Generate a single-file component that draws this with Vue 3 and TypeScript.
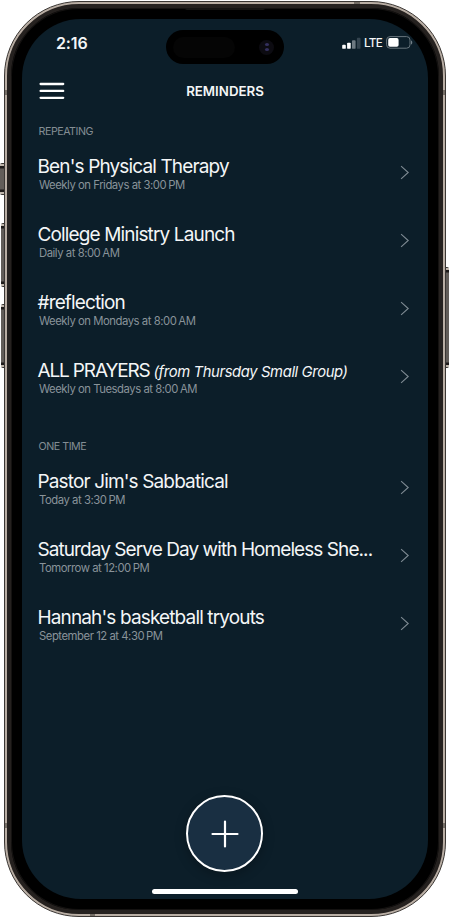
<script setup lang="ts">
interface Reminder {
  title: string
  note?: string
  schedule: string
  period: string
}
interface Section {
  label: string
  items: Reminder[]
}

const sections: Section[] = [
  {
    label: 'REPEATING',
    items: [
      { title: "Ben's Physical Therapy", schedule: 'Weekly on Fridays at 3:00', period: 'PM' },
      { title: 'College Ministry Launch', schedule: 'Daily at 8:00', period: 'AM' },
      { title: '#reflection', schedule: 'Weekly on Mondays at 8:00', period: 'AM' },
      { title: 'ALL PRAYERS', note: '(from Thursday Small Group)', schedule: 'Weekly on Tuesdays at 8:00', period: 'AM' },
    ],
  },
  {
    label: 'ONE TIME',
    items: [
      { title: "Pastor Jim's Sabbatical", schedule: 'Today at 3:30', period: 'PM' },
      { title: 'Saturday Serve Day with Homeless She...', schedule: 'Tomorrow at 12:00', period: 'PM' },
      { title: "Hannah's basketball tryouts", schedule: 'September 12 at 4:30', period: 'PM' },
    ],
  },
]
</script>

<template>
  <div class="stage">
    <i class="key action"></i>
    <i class="key vol-up"></i>
    <i class="key vol-down"></i>
    <i class="key power"></i>
    <div class="phone">
      <div class="bezel">
        <main class="screen">
          <div class="status">
            <span class="time">2:16</span>
            <div class="signals">
              <svg class="bars" width="19" height="12" viewBox="0 0 19 12">
                <rect x="0.2" y="7.8" width="3.6" height="4" rx="0.9" fill="#fff" />
                <rect x="5.1" y="5.7" width="3.6" height="6.1" rx="0.9" fill="#fff" />
                <rect x="10" y="3.2" width="3.6" height="8.6" rx="0.9" fill="#6d7981" />
                <rect x="14.9" y="0.8" width="3.6" height="11" rx="0.9" fill="#34444f" />
              </svg>
              <span class="lte">LTE</span>
              <svg class="battery" width="27" height="13" viewBox="0 0 27 13">
                <rect x="0.6" y="0.6" width="23.4" height="11.6" rx="3.4" fill="none" stroke="#67747c" stroke-width="1" />
                <rect x="2.2" y="2.1" width="10.4" height="8.7" rx="1.8" fill="#fff" />
                <path d="M25 4.5c1.7.5 1.7 3.5 0 4z" fill="#738089" />
              </svg>
            </div>
          </div>

          <header class="nav">
            <svg class="menu" width="26" height="18" viewBox="0 0 26 18">
              <path d="M1.6 2h22.6M1.6 8.9h22.6M1.6 15.8h22.6" stroke="#fff" stroke-width="2.3" stroke-linecap="round" />
            </svg>
            <h1>REMINDERS</h1>
          </header>

          <section v-for="section in sections" :key="section.label" class="group">
            <h2>{{ section.label }}</h2>
            <div v-for="item in section.items" :key="item.title" class="row">
              <div class="text">
                <div class="title" :class="{ caps: item.note, long: item.title.length > 30 }">{{ item.title }}<em v-if="item.note">{{ item.note }}</em></div>
                <div class="when">{{ item.schedule }}<span class="period">{{ item.period }}</span></div>
              </div>
              <svg class="chevron" width="10" height="15" viewBox="0 0 10 15">
                <path d="M1.1 1.2L8.2 7.5L1.1 13.8" fill="none" stroke="#7e8a92" stroke-width="1.1" />
              </svg>
            </div>
          </section>

          <button class="add" aria-label="Add reminder">
            <svg width="28" height="28" viewBox="0 0 28 28">
              <path d="M14 1.5v25M1.5 14h25" stroke="#fff" stroke-width="2.2" stroke-linecap="round" />
            </svg>
          </button>
          <div class="home"></div>
          <div class="island">
            <div class="sensor"></div>
            <div class="lens"><i></i><i></i></div>
          </div>
        </main>
      </div>
    </div>
    <i class="speaker"></i>
    <i class="seam seam-top"></i>
    <i class="seam seam-bottom"></i>
    <i class="seam seam-left-top"></i>
    <i class="seam seam-left-bottom"></i>
    <i class="seam seam-right-top"></i>
    <i class="seam seam-right-bottom"></i>
  </div>
</template>

<style>
body {
  background: #fff;
}
</style>

<style scoped>
* {
  box-sizing: border-box;
}
.stage {
  position: relative;
  width: 449px;
  height: 918px;
  padding: 1px 3px 1px 4px;
  overflow: hidden;
  background: #fff;
  font-family: Inter, "Liberation Sans", sans-serif;
}
.phone {
  width: 442px;
  height: 916px;
  padding: 2px;
  border-radius: 75px;
  background: #b9aea4;
  border: 1px solid #3a3633;
  position: relative;
}
.bezel {
  width: 436px;
  height: 910px;
  padding: 10px 10px 10px 11px;
  border: 4px solid #25211f;
  border-radius: 72px;
  background: #000;
  box-shadow: inset 0 0 0 1px #141211;
}
.screen {
  position: relative;
  width: 406px;
  height: 880px;
  margin-top: 1px;
  border-radius: 59px;
  background: #0c1e29;
  color: #f4f6f7;
  display: flex;
  flex-direction: column;
  overflow: hidden;
}
.status {
  display: flex;
  justify-content: space-between;
  align-items: center;
  height: 48px;
  padding: 0 15px 0 34px;
}
.time {
  font-size: 16px;
  font-weight: 600;
  line-height: 20px;
  letter-spacing: -0.1px;
}
.signals {
  display: flex;
  align-items: center;
  padding-bottom: 1px;
}
.lte {
  margin: 1px 4px 0 3px;
  font-size: 11.7px;
  font-weight: 500;
  line-height: 14px;
  letter-spacing: -0.7px;
}
.nav {
  display: grid;
  grid-template-columns: 40px 1fr 40px;
  align-items: center;
  height: 48px;
  padding: 0 16px;
}
.menu {
  margin-left: 1px;
}
h1 {
  margin: 0;
  text-align: center;
  font-size: 13.3px;
  font-weight: 600;
  line-height: 18px;
}
.group {
  margin-bottom: 27px;
}
h2 {
  margin: 0;
  height: 23px;
  padding: 9px 17px 0 16.6px;
  font-size: 10.7px;
  line-height: 15px;
  font-weight: 400;
  letter-spacing: -0.5px;
  color: #848e94;
}
.group + .group h2 {
  height: 16px;
  padding-top: 2px;
}
.row {
  display: flex;
  align-items: center;
  justify-content: space-between;
  height: 68px;
  padding: 0 18px 0 15.5px;
}
.text {
  width: 338px;
  padding-top: 3px;
}
.title {
  white-space: nowrap;
  font-size: 19px;
  line-height: 23px;
  font-weight: 400;
  letter-spacing: -0.86px;
}
.title.caps {
  letter-spacing: -1.15px;
}
.title.long {
  letter-spacing: -0.93px;
}
.title em {
  margin-left: 4px;
  font-size: 14.8px;
  line-height: 20px;
  letter-spacing: -0.38px;
}
.when {
  padding-left: 1.5px;
  font-size: 11.3px;
  line-height: 14px;
  letter-spacing: -0.46px;
  color: #89939a;
}
.period {
  margin-left: 2px;
}
.add {
  position: absolute;
  left: 164px;
  top: 776px;
  width: 77px;
  height: 77px;
  padding: 0;
  display: flex;
  align-items: center;
  justify-content: center;
  border: 2px solid #fff;
  border-radius: 50%;
  background: #192f42;
  box-shadow: 0 3px 12px rgba(0, 0, 0, 0.28);
}
.home {
  position: absolute;
  left: 130px;
  bottom: 5px;
  width: 146px;
  height: 5px;
  border-radius: 3px;
  background: #fff;
}
.island {
  position: absolute;
  left: 144px;
  top: 11px;
  width: 118px;
  height: 34px;
  border-radius: 17px;
  background: #000;
  display: flex;
  align-items: center;
  justify-content: space-between;
  padding: 0 10px 0 7px;
}
.sensor {
  width: 62px;
  height: 21px;
  border-radius: 11px;
  background: #050505;
}
.lens {
  width: 15px;
  height: 15px;
  border-radius: 50%;
  background: #0c0b11;
  display: flex;
  flex-direction: column;
  align-items: center;
  justify-content: center;
  gap: 2px;
}
.lens i {
  width: 4px;
  height: 3px;
  border-radius: 50%;
  background: #34305e;
}
.key {
  position: absolute;
  width: 5px;
  border-radius: 2px 0 0 2px;
  background: linear-gradient(#373431 0 1px, #bdb4aa 1px 3px, #1d1a19 3px 5px, #625d59 6px calc(100% - 6px), #1d1a19 calc(100% - 5px) calc(100% - 3px), #bdb4aa calc(100% - 3px) calc(100% - 1px), #373431 calc(100% - 1px));
}
.action {
  left: 0;
  top: 163px;
  height: 32px;
}
.vol-up {
  left: 1px;
  top: 223px;
  height: 64px;
}
.vol-down {
  left: 1px;
  top: 304px;
  height: 64px;
}
.power {
  left: 445px;
  top: 267px;
  width: 4px;
  height: 101px;
  border-radius: 0 2px 2px 0;
}
.seam {
  position: absolute;
  background: #756e66;
}
.seam-top {
  left: 354px;
  top: 2px;
  width: 6px;
  height: 2px;
}
.seam-bottom {
  left: 90px;
  bottom: 2px;
  width: 5px;
  height: 2px;
}
.seam-left-top,
.seam-left-bottom {
  left: 5px;
  width: 2px;
  height: 5px;
}
.seam-right-top,
.seam-right-bottom {
  right: 4px;
  width: 2px;
  height: 5px;
}
.seam-left-top,
.seam-right-top {
  top: 90px;
}
.seam-left-bottom,
.seam-right-bottom {
  top: 823px;
}
.speaker {
  position: absolute;
  left: 185px;
  top: 8px;
  width: 80px;
  height: 2px;
  border-radius: 0 0 2px 2px;
  background: #161514;
}
</style>
